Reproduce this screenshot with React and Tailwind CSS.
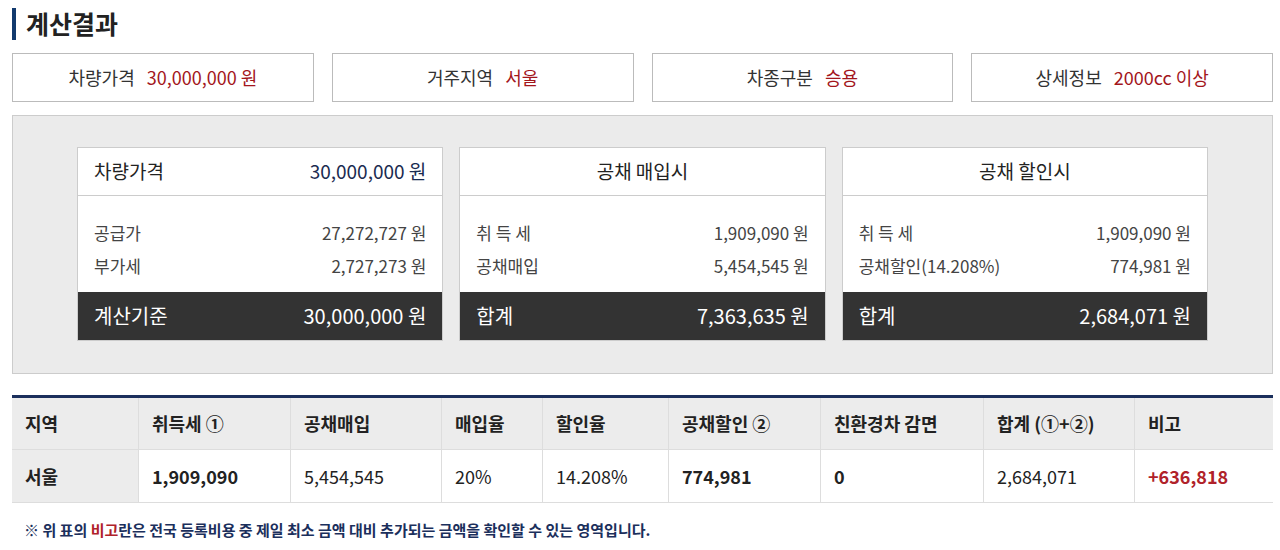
const F = { fontFamily: '"Noto Sans CJK KR", "Noto Sans", sans-serif' }

function Card({ head, rows, foot }) {
  return (
    <div className="flex-1 bg-white border border-[#ccc] flex flex-col">
      <div className="h-[48px] flex items-center justify-between px-4 border-b border-[#ccc] text-[19px] text-[#222]">{head}</div>
      <div className="flex-1 px-4 pt-[20px] text-[17px] text-[#444] leading-[33px]">
        {rows.map(([a, b]) => (
          <div key={a} className="flex justify-between"><span>{a}</span><span>{b}</span></div>
        ))}
      </div>
      <div className="h-[48px] bg-[#333] text-white flex items-center justify-between px-4 text-[20px]">
        <span>{foot[0]}</span><span>{foot[1]}</span>
      </div>
    </div>
  )
}

const cols = [126, 152, 151, 101, 126, 152, 163, 151, 139]
const head = ['지역', '취득세 ①', '공채매입', '매입율', '할인율', '공채할인 ②', '친환경차 감면', '합계 (①+②)', '비고']
const body = ['서울', '1,909,090', '5,454,545', '20%', '14.208%', '774,981', '0', '2,684,071', '+636,818']
const bold = [true, true, false, false, false, true, true, false, true]

export default function App() {
  return (
    <div style={F} className="w-[1280px] h-[550px] bg-white pl-[12px] pr-[7px] overflow-hidden">
      <div className="flex items-center h-[48px] pt-[0px]">
        <div className="w-[4px] h-[32px] bg-[#123a6e] mr-[10px]" />
        <h1 className="text-[25px] font-bold text-[#222]">계산결과</h1>
      </div>
      <div className="flex gap-[18px] mt-[5px]">
        {[['차량가격', '30,000,000 원'], ['거주지역', '서울'], ['차종구분', '승용'], ['상세정보', '2000cc 이상']].map(([a, b]) => (
          <div key={a} className="flex-1 h-[49px] border border-[#bbb] flex items-center justify-center gap-[12px] text-[18px]">
            <span className="text-[#333]">{a}</span><span className="text-[#a3161c]">{b}</span>
          </div>
        ))}
      </div>
      <div className="mt-[13px] h-[259px] bg-[#ebebeb] border border-[#ccc] px-[64px] pt-[31px] flex gap-[16px]">
        <div className="flex-1 flex flex-col h-[194px]">
          <div className="flex-1 bg-white border border-[#ccc] flex flex-col">
            <div className="h-[48px] flex items-center justify-between px-4 border-b border-[#ccc] text-[19px] text-[#222]">
              <span>차량가격</span><span className="text-[#1a2b50]">30,000,000 원</span>
            </div>
            <div className="flex-1 px-4 pt-[20px] text-[17px] text-[#444] leading-[33px]">
              <div className="flex justify-between"><span>공급가</span><span>27,272,727 원</span></div>
              <div className="flex justify-between"><span>부가세</span><span>2,727,273 원</span></div>
            </div>
            <div className="h-[48px] bg-[#333] text-white flex items-center justify-between px-4 text-[20px]">
              <span>계산기준</span><span>30,000,000 원</span>
            </div>
          </div>
        </div>
        <div className="flex-1 flex flex-col h-[194px]">
          <Card head={<span className="w-full text-center">공채 매입시</span>} rows={[['취 득 세', '1,909,090 원'], ['공채매입', '5,454,545 원']]} foot={['합계', '7,363,635 원']} />
        </div>
        <div className="flex-1 flex flex-col h-[194px]">
          <Card head={<span className="w-full text-center">공채 할인시</span>} rows={[['취 득 세', '1,909,090 원'], ['공채할인(14.208%)', '774,981 원']]} foot={['합계', '2,684,071 원']} />
        </div>
      </div>
      <div className="mt-[21px] border-t-[3px] border-[#1b2f5c]">
        <div className="flex bg-[#ececec] h-[52px] border-b border-[#ddd]">
          {head.map((h, i) => (
            <div key={h} style={{ width: cols[i] }} className={`flex items-center pl-[13px] text-[18px] font-bold text-[#222] ${i ? 'border-l border-[#ddd]' : ''}`}>{h}</div>
          ))}
        </div>
        <div className="flex h-[53px] border-b border-[#ddd]">
          {body.map((h, i) => (
            <div key={i} style={{ width: cols[i] }} className={`flex items-center pl-[13px] text-[18px] ${i === 0 ? 'bg-[#ececec]' : 'border-l border-[#ddd]'} ${bold[i] ? 'font-bold' : ''} ${i === 8 ? 'text-[#b0222a]' : 'text-[#222]'}`}>{h}</div>
          ))}
        </div>
      </div>
      <p className="mt-[16px] pl-[12px] text-[15px] font-bold text-[#1b2f5c]">
        ※ 위 표의 <span className="text-[#b0222a]">비고</span>란은 전국 등록비용 중 제일 최소 금액 대비 추가되는 금액을 확인할 수 있는 영역입니다.
      </p>
    </div>
  )
}
